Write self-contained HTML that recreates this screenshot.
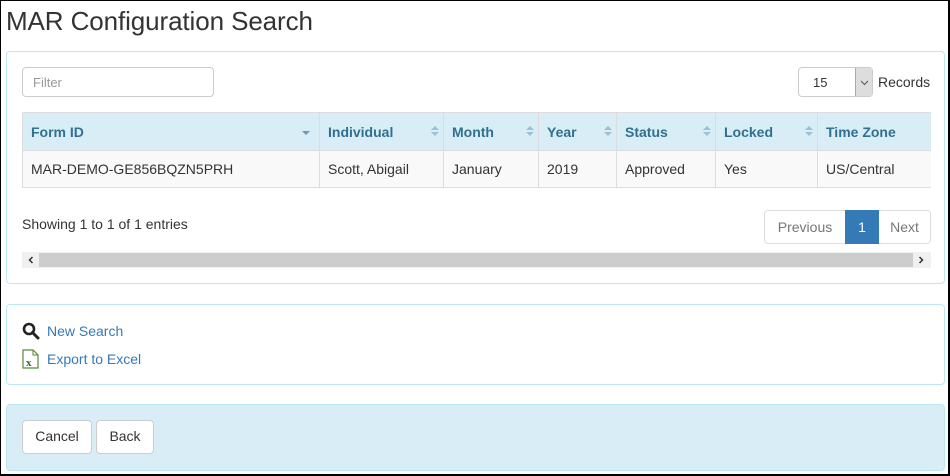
<!DOCTYPE html>
<html><head><style>
*{box-sizing:border-box;margin:0;padding:0}
html,body{width:950px;height:476px;overflow:hidden;background:#fff}
body{font-family:"Liberation Sans",Arial,sans-serif;font-size:14px;color:#333;position:relative;border:1px solid #000;border-right:2px solid #000;border-bottom:2px solid #000}
.a{position:absolute}
h1{position:absolute;left:5px;top:5px;font-size:26px;font-weight:normal;color:#333;line-height:30px;letter-spacing:-0.1px}
.panel{position:absolute;left:5px;width:939px;border:1px solid #bce8f1;border-radius:4px;background:#fff}
.inp{border:1px solid #ccc;border-radius:4px;background:#fff}
table{border-collapse:collapse;position:absolute;left:21px;top:111px;table-layout:fixed;width:915px}
th,td{border:1px solid #ddd;padding:0 8px;text-align:left;white-space:nowrap;overflow:hidden}
th{background:#d9edf7;color:#31708f;font-weight:bold;height:38px;position:relative}
td{background:#f9f9f9;height:37px}
.s{position:absolute;right:8px;top:14px;width:0;height:0}
.s:before{content:"";position:absolute;left:-4px;top:-1px;border:4px solid transparent;border-bottom:4px solid #9fbfd2;border-top:0}
.s:after{content:"";position:absolute;left:-4px;top:5px;border:4px solid transparent;border-top:4px solid #9fbfd2;border-bottom:0}
.btn{position:absolute;border:1px solid #ccc;border-radius:4px;background:#fff;text-align:center;line-height:31px;color:#333}
a{color:#337ab7;text-decoration:none}
</style></head><body>
<h1>MAR Configuration Search</h1>
<div class="panel" style="top:50px;height:233px"></div>
<div class="a inp" style="left:21px;top:66px;width:192px;height:30px;color:#999;font-size:13px;padding:7px 10px">Filter</div>
<div class="a inp" style="left:797px;top:66px;width:75px;height:30px;font-size:13px;padding:7px 14px">15</div>
<div class="a" style="left:854px;top:67px;width:17px;height:28px;background:#ddd;border-left:1px solid #aaa"><svg width="17" height="28"><path d="M5 13l3.5 3.5L12 13" fill="none" stroke="#555" stroke-width="1"/></svg></div>
<div class="a" style="left:877px;top:73px">Records</div>
<div class="a" style="left:21px;top:111px;width:909px;height:76px;overflow:hidden">
<table style="left:0;top:0">
<colgroup><col style="width:297px"><col style="width:124px"><col style="width:95px"><col style="width:78px"><col style="width:99px"><col style="width:102px"><col style="width:120px"></colgroup>
<tr><th>Form ID<span class="a" style="right:9px;top:18px;border:4px solid transparent;border-top:4px solid #6a9ab8;border-bottom:0"></span></th><th>Individual<span class="s"></span></th><th>Month<span class="s"></span></th><th>Year<span class="s"></span></th><th>Status<span class="s"></span></th><th>Locked<span class="s"></span></th><th>Time Zone</th></tr>
<tr><td>MAR-DEMO-GE856BQZN5PRH</td><td>Scott, Abigail</td><td>January</td><td>2019</td><td>Approved</td><td>Yes</td><td>US/Central</td></tr>
</table></div>
<div class="a" style="left:21px;top:215px">Showing 1 to 1 of 1 entries</div>
<div class="a" style="left:763px;top:209px;width:167px;height:34px;border:1px solid #ddd;border-radius:4px"></div>
<div class="a" style="left:764px;top:210px;width:80px;height:32px;line-height:32px;text-align:center;color:#777">Previous</div>
<div class="a" style="left:844px;top:209px;width:34px;height:34px;line-height:34px;text-align:center;color:#fff;background:#337ab7">1</div>
<div class="a" style="left:878px;top:210px;width:51px;height:32px;line-height:32px;text-align:center;color:#777">Next</div>
<div class="a" style="left:21px;top:251px;width:909px;height:16px;background:#f0f0f0"></div>
<div class="a" style="left:38px;top:252px;width:874px;height:14px;background:#cdcdcd"></div>
<svg class="a" style="left:26px;top:254px" width="8" height="10"><path d="M5.5 2L2.5 5l3 3" fill="none" stroke="#333" stroke-width="1.5"/></svg>
<svg class="a" style="left:916px;top:254px" width="8" height="10"><path d="M2.5 2l3 3-3 3" fill="none" stroke="#333" stroke-width="1.5"/></svg>
<div class="panel" style="top:303px;height:81px"></div>
<svg class="a" style="left:21px;top:321px" width="18" height="18" viewBox="0 0 18 18"><circle cx="7" cy="7" r="5" fill="none" stroke="#222" stroke-width="2.6"/><path d="M10.5 10.5L16 16" stroke="#222" stroke-width="3" stroke-linecap="round"/></svg>
<a class="a" style="left:46px;top:322px">New Search</a>
<svg class="a" style="left:21px;top:348px" width="17" height="20" viewBox="0 0 17 20"><path d="M1 1H11L16 6V19H1Z" fill="#fff" stroke="#5a8a3a" stroke-width="1.2"/><path d="M11 1V6H16" fill="none" stroke="#5a8a3a"/><text x="4" y="17" font-family="Liberation Serif" font-size="11" font-weight="bold" fill="#2e6b2e">x</text></svg>
<a class="a" style="left:46px;top:350px">Export to Excel</a>
<div class="panel" style="top:403px;height:67px;background:#d9edf7"></div>
<div class="btn" style="left:21px;top:419px;width:70px;height:34px">Cancel</div>
<div class="btn" style="left:95px;top:419px;width:58px;height:34px">Back</div>
</body></html>
